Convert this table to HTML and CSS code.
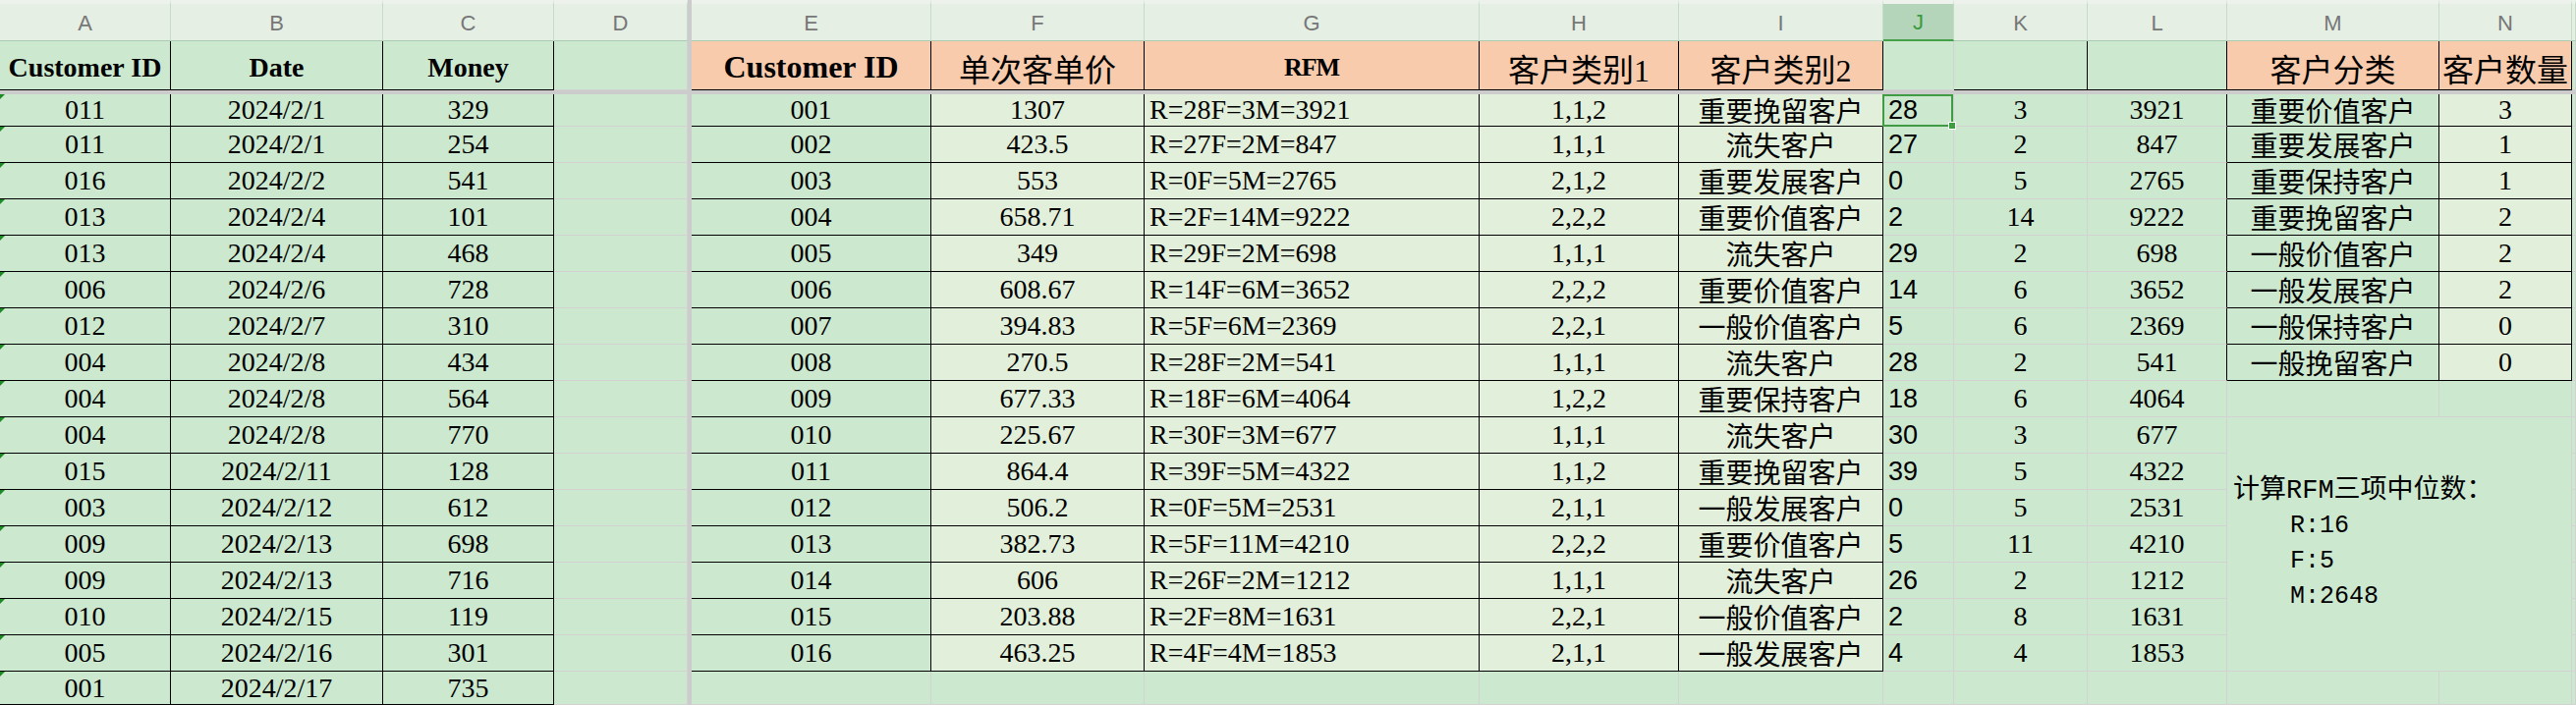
FILE: index.html
```html
<!DOCTYPE html>
<html lang="zh-CN">
<head>
<meta charset="utf-8">
<title>RFM</title>
<link rel="stylesheet" href="styles.css">
</head>
<body>
<div class="sheet">
  <!-- column letters -->
  <div class="h">A</div><div class="h">B</div><div class="h">C</div><div class="h">D</div><div class="h fz"></div>
  <div class="h">E</div><div class="h">F</div><div class="h">G</div><div class="h">H</div><div class="h">I</div><div class="h on">J</div><div class="h">K</div><div class="h">L</div><div class="h">M</div><div class="h">N</div><div class="h"></div>
  <!-- header row -->
  <div class="c k hb">Customer ID</div><div class="c k hb">Date</div><div class="c k hb">Money</div><div class="c"></div><div class="fz"></div>
  <div class="c k or hb2">Customer ID</div><div class="c k or hz">单次客单价</div><div class="c k or rfm">RFM</div><div class="c k or hz">客户类别1</div><div class="c k or hz">客户类别2</div><div class="c"></div><div class="c k"></div><div class="c k"></div><div class="c k or hz">客户分类</div><div class="c k or hz">客户数量</div><div class="c"></div>
  <!-- frozen pane divider -->
  <div class="fzrow"></div>
  <!-- 1 -->
  <div class="c k tri">011</div><div class="c k">2024/2/1</div><div class="c k">329</div><div class="c"></div><div class="fz"></div>
  <div class="c k">001</div><div class="c k lt">1307</div><div class="c k lt l">R=28F=3M=3921</div><div class="c k lt">1,1,2</div><div class="c k lt">重要挽留客户</div><div class="c l sans sel">28</div><div class="c">3</div><div class="c br">3921</div><div class="c k">重要价值客户</div><div class="c k lt">3</div><div class="c"></div>
  <!-- 2 -->
  <div class="c k tri">011</div><div class="c k">2024/2/1</div><div class="c k">254</div><div class="c"></div><div class="fz"></div>
  <div class="c k">002</div><div class="c k lt">423.5</div><div class="c k lt l">R=27F=2M=847</div><div class="c k lt">1,1,1</div><div class="c k lt">流失客户</div><div class="c l sans">27</div><div class="c">2</div><div class="c br">847</div><div class="c k">重要发展客户</div><div class="c k lt">1</div><div class="c"></div>
  <!-- 3 -->
  <div class="c k tri">016</div><div class="c k">2024/2/2</div><div class="c k">541</div><div class="c"></div><div class="fz"></div>
  <div class="c k">003</div><div class="c k lt">553</div><div class="c k lt l">R=0F=5M=2765</div><div class="c k lt">2,1,2</div><div class="c k lt">重要发展客户</div><div class="c l sans">0</div><div class="c">5</div><div class="c br">2765</div><div class="c k">重要保持客户</div><div class="c k lt">1</div><div class="c"></div>
  <!-- 4 -->
  <div class="c k tri">013</div><div class="c k">2024/2/4</div><div class="c k">101</div><div class="c"></div><div class="fz"></div>
  <div class="c k">004</div><div class="c k lt">658.71</div><div class="c k lt l">R=2F=14M=9222</div><div class="c k lt">2,2,2</div><div class="c k lt">重要价值客户</div><div class="c l sans">2</div><div class="c">14</div><div class="c br">9222</div><div class="c k">重要挽留客户</div><div class="c k lt">2</div><div class="c"></div>
  <!-- 5 -->
  <div class="c k tri">013</div><div class="c k">2024/2/4</div><div class="c k">468</div><div class="c"></div><div class="fz"></div>
  <div class="c k">005</div><div class="c k lt">349</div><div class="c k lt l">R=29F=2M=698</div><div class="c k lt">1,1,1</div><div class="c k lt">流失客户</div><div class="c l sans">29</div><div class="c">2</div><div class="c br">698</div><div class="c k">一般价值客户</div><div class="c k lt">2</div><div class="c"></div>
  <!-- 6 -->
  <div class="c k tri">006</div><div class="c k">2024/2/6</div><div class="c k">728</div><div class="c"></div><div class="fz"></div>
  <div class="c k">006</div><div class="c k lt">608.67</div><div class="c k lt l">R=14F=6M=3652</div><div class="c k lt">2,2,2</div><div class="c k lt">重要价值客户</div><div class="c l sans">14</div><div class="c">6</div><div class="c br">3652</div><div class="c k">一般发展客户</div><div class="c k lt">2</div><div class="c"></div>
  <!-- 7 -->
  <div class="c k tri">012</div><div class="c k">2024/2/7</div><div class="c k">310</div><div class="c"></div><div class="fz"></div>
  <div class="c k">007</div><div class="c k lt">394.83</div><div class="c k lt l">R=5F=6M=2369</div><div class="c k lt">2,2,1</div><div class="c k lt">一般价值客户</div><div class="c l sans">5</div><div class="c">6</div><div class="c br">2369</div><div class="c k">一般保持客户</div><div class="c k lt">0</div><div class="c"></div>
  <!-- 8 -->
  <div class="c k tri">004</div><div class="c k">2024/2/8</div><div class="c k">434</div><div class="c"></div><div class="fz"></div>
  <div class="c k">008</div><div class="c k lt">270.5</div><div class="c k lt l">R=28F=2M=541</div><div class="c k lt">1,1,1</div><div class="c k lt">流失客户</div><div class="c l sans">28</div><div class="c">2</div><div class="c br">541</div><div class="c k">一般挽留客户</div><div class="c k lt">0</div><div class="c"></div>
  <!-- 9 -->
  <div class="c k tri">004</div><div class="c k">2024/2/8</div><div class="c k">564</div><div class="c"></div><div class="fz"></div>
  <div class="c k">009</div><div class="c k lt">677.33</div><div class="c k lt l">R=18F=6M=4064</div><div class="c k lt">1,2,2</div><div class="c k lt">重要保持客户</div><div class="c l sans">18</div><div class="c">6</div><div class="c">4064</div><div class="c"></div><div class="c"></div><div class="c"></div>
  <!-- 10 -->
  <div class="c k tri">004</div><div class="c k">2024/2/8</div><div class="c k">770</div><div class="c"></div><div class="fz"></div>
  <div class="c k">010</div><div class="c k lt">225.67</div><div class="c k lt l">R=30F=3M=677</div><div class="c k lt">1,1,1</div><div class="c k lt">流失客户</div><div class="c l sans">30</div><div class="c">3</div><div class="c">677</div>
  <div class="c mg"><p>计算RFM三项中位数：</p><p class="ind">R:16</p><p class="ind">F:5</p><p class="ind">M:2648</p></div><div class="c"></div>
  <!-- 11 -->
  <div class="c k tri">015</div><div class="c k">2024/2/11</div><div class="c k">128</div><div class="c"></div><div class="fz"></div>
  <div class="c k">011</div><div class="c k lt">864.4</div><div class="c k lt l">R=39F=5M=4322</div><div class="c k lt">1,1,2</div><div class="c k lt">重要挽留客户</div><div class="c l sans">39</div><div class="c">5</div><div class="c">4322</div><div class="c"></div>
  <!-- 12 -->
  <div class="c k tri">003</div><div class="c k">2024/2/12</div><div class="c k">612</div><div class="c"></div><div class="fz"></div>
  <div class="c k">012</div><div class="c k lt">506.2</div><div class="c k lt l">R=0F=5M=2531</div><div class="c k lt">2,1,1</div><div class="c k lt">一般发展客户</div><div class="c l sans">0</div><div class="c">5</div><div class="c">2531</div><div class="c"></div>
  <!-- 13 -->
  <div class="c k tri">009</div><div class="c k">2024/2/13</div><div class="c k">698</div><div class="c"></div><div class="fz"></div>
  <div class="c k">013</div><div class="c k lt">382.73</div><div class="c k lt l">R=5F=11M=4210</div><div class="c k lt">2,2,2</div><div class="c k lt">重要价值客户</div><div class="c l sans">5</div><div class="c">11</div><div class="c">4210</div><div class="c"></div>
  <!-- 14 -->
  <div class="c k tri">009</div><div class="c k">2024/2/13</div><div class="c k">716</div><div class="c"></div><div class="fz"></div>
  <div class="c k">014</div><div class="c k lt">606</div><div class="c k lt l">R=26F=2M=1212</div><div class="c k lt">1,1,1</div><div class="c k lt">流失客户</div><div class="c l sans">26</div><div class="c">2</div><div class="c">1212</div><div class="c"></div>
  <!-- 15 -->
  <div class="c k tri">010</div><div class="c k">2024/2/15</div><div class="c k">119</div><div class="c"></div><div class="fz"></div>
  <div class="c k">015</div><div class="c k lt">203.88</div><div class="c k lt l">R=2F=8M=1631</div><div class="c k lt">2,2,1</div><div class="c k lt">一般价值客户</div><div class="c l sans">2</div><div class="c">8</div><div class="c">1631</div><div class="c"></div>
  <!-- 16 -->
  <div class="c k tri">005</div><div class="c k">2024/2/16</div><div class="c k">301</div><div class="c"></div><div class="fz"></div>
  <div class="c k">016</div><div class="c k lt">463.25</div><div class="c k lt l">R=4F=4M=1853</div><div class="c k lt">2,1,1</div><div class="c k lt">一般发展客户</div><div class="c l sans">4</div><div class="c">4</div><div class="c">1853</div><div class="c"></div>
  <!-- 17 -->
  <div class="c k tri">001</div><div class="c k">2024/2/17</div><div class="c k">735</div><div class="c"></div><div class="fz"></div>
  <div class="c"></div><div class="c"></div><div class="c"></div><div class="c"></div><div class="c"></div><div class="c"></div><div class="c"></div><div class="c"></div><div class="c"></div><div class="c"></div><div class="c"></div>
</div>
</body>
</html>
```
FILE: styles.css
```css
* { box-sizing: border-box; margin: 0; padding: 0; }
html, body { width: 2622px; height: 718px; overflow: hidden; background: #cce8cf; }

.sheet {
  display: grid;
  grid-template-columns: 174px 216px 174px 136px 4px 244px 217px 341px 203px 208px 72px 136px 142px 216px 135px 4px;
  grid-template-rows: 42px 50px 4px 33px repeat(15, 37px) 34px;
  font-family: "Liberation Serif", "Noto Sans CJK SC", serif;
  font-size: 28px;
  color: #000;
}

/* column letter header */
.h {
  background: #e5efe4;
  border-top: 4px solid #edf3ec;
  border-right: 1px solid #c6dbca;
  border-bottom: 1px solid #a8cbb1;
  font-family: "Liberation Sans", sans-serif;
  font-size: 22px;
  color: #777;
  display: flex;
  align-items: center;
  justify-content: center;
  padding-top: 2px;
}
.h.on {
  background: #b5d5bb;
  color: #3c9a42;
  border-bottom: 2px solid #45a04a;
}

/* frozen pane lines */
.fz { background: #cccccc; border: none; }
.h.fz { background: #cccccc; border-right: none; border-bottom: none; }
.fzrow { grid-column: 1 / -1; background: #cccccc; }

/* cells */
.c {
  position: relative;
  background: #cce8cf;
  border-right: 1px solid #d2d2d2;
  border-bottom: 1px solid #d2d2d2;
  display: flex;
  align-items: center;
  justify-content: center;
  white-space: nowrap;
}
.k { border-right-color: #000; border-bottom-color: #000; }
.br { border-right-color: #000; }
.lt { background: #e2efda; }
.or { background: #f8cbad; }
.l { justify-content: flex-start; padding-left: 5px; }
.sans { font-family: "Liberation Sans", sans-serif; font-size: 27px; }

.hb { font-weight: bold; font-size: 28px; padding-top: 4px; }
.hb2 { font-weight: bold; font-size: 32px; padding-top: 4px; }
.hz { font-size: 32px; padding-top: 4px; }
.rfm { font-weight: bold; font-size: 26px; letter-spacing: -1px; padding-top: 4px; }

/* "number stored as text" marker */
.tri::before {
  content: "";
  position: absolute;
  left: 0;
  top: 0;
  border-top: 5px solid #1c8a22;
  border-right: 5px solid transparent;
}

/* active cell */
.sel { z-index: 2; }
.sel::after {
  content: "";
  position: absolute;
  left: -1px;
  top: 0;
  right: 0;
  bottom: -1px;
  border: 2px solid #3f9c45;
}
.sel::before {
  content: "";
  position: absolute;
  right: -3px;
  bottom: -4px;
  width: 6px;
  height: 6px;
  background: #3f9c45;
  border: 1px solid #fff;
  z-index: 3;
}

/* merged note cell */
.mg {
  grid-row: span 7;
  grid-column: span 2;
  flex-direction: column;
  align-items: flex-start;
  justify-content: center;
  padding-left: 6px;
  font-family: "Liberation Mono", "Noto Sans CJK SC", monospace;
  font-size: 27px;
  line-height: 36px;
}
.mg .ind { padding-left: 58px; font-size: 25px; }
```
